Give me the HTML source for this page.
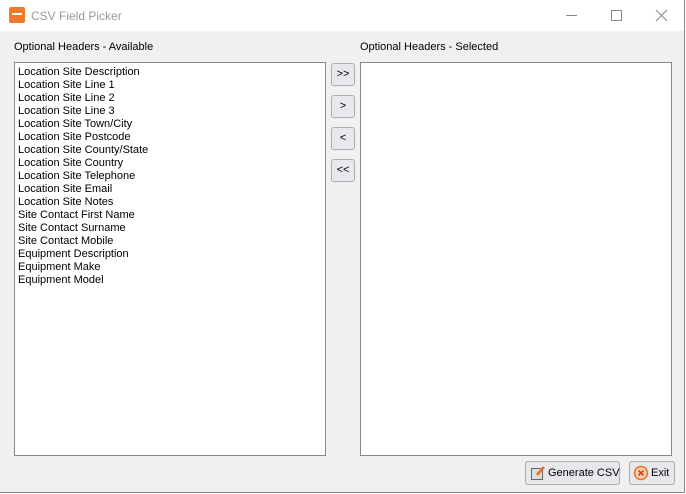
<!DOCTYPE html>
<html><head><style>
body{margin:0;width:686px;height:494px;overflow:hidden;background:#fff;font-family:"Liberation Sans",sans-serif;font-size:11px;color:#000;position:relative}
.win{position:absolute;left:0;top:0;width:684px;height:492px;border-right:1px solid #888;border-bottom:1px solid #888;background:#f0f0f0}
.title{position:absolute;left:0;top:0;width:684px;height:31px;background:#fff}
.title .t{position:absolute;left:31px;top:9px;font-size:12px;color:#999}
.ico{position:absolute;left:9px;top:7px;width:16px;height:16px;background:#f07a2a;border-radius:2px}
.ico:after{content:"";position:absolute;left:3px;top:6px;width:10px;height:2px;background:#fff}
.lbl{position:absolute;top:41px;font-size:11px}
.list{position:absolute;top:62px;height:392px;background:#fff;border:1px solid #828790}
.items{padding:3px 0 0 3px;line-height:13px}
.b{position:absolute;left:331px;width:22px;height:21px;border:1px solid #adadad;border-radius:3px;background:#e8e8ec;text-align:center;line-height:21px;font-size:11px}
.btn{position:absolute;top:461px;height:22px;border:1px solid #adadad;border-radius:3px;background:#e8e8ec;line-height:22px;font-size:11px;white-space:nowrap}
</style></head><body>
<div class="win">
<div class="title"><div class="ico"></div><div class="t">CSV Field Picker</div>
<svg style="position:absolute;left:560px;top:8px" width="120" height="16"><line x1="6" y1="7.5" x2="17" y2="7.5" stroke="#888"/><rect x="51.5" y="2.5" width="10" height="10" fill="none" stroke="#888"/><path d="M96 2L107 13M107 2L96 13" stroke="#888"/></svg></div>
<div class="lbl" style="left:14px">Optional Headers - Available</div>
<div class="lbl" style="left:360px">Optional Headers - Selected</div>
<div class="list" style="left:14px;width:310px"><div class="items">Location Site Description<br>Location Site Line 1<br>Location Site Line 2<br>Location Site Line 3<br>Location Site Town/City<br>Location Site Postcode<br>Location Site County/State<br>Location Site Country<br>Location Site Telephone<br>Location Site Email<br>Location Site Notes<br>Site Contact First Name<br>Site Contact Surname<br>Site Contact Mobile<br>Equipment Description<br>Equipment Make<br>Equipment Model</div></div>
<div class="list" style="left:360px;width:310px"></div>
<div class="b" style="top:63px">&gt;&gt;</div>
<div class="b" style="top:95px">&gt;</div>
<div class="b" style="top:127px">&lt;</div>
<div class="b" style="top:159px">&lt;&lt;</div>
<div class="btn" style="left:525px;width:93px"><svg style="position:absolute;left:4px;top:3px" width="16" height="16"><rect x="1.5" y="3.5" width="11" height="11" fill="#ddd" stroke="#666"/><path d="M7 10L14 2" stroke="#e8702a" stroke-width="2.5"/></svg><span style="position:absolute;left:22px">Generate CSV</span></div>
<div class="btn" style="left:629px;width:44px"><svg style="position:absolute;left:3px;top:3px" width="16" height="16"><circle cx="8" cy="8" r="6.5" fill="#fbd0b0" stroke="#e8702a" stroke-width="1.5"/><path d="M5.5 5.5L10.5 10.5M10.5 5.5L5.5 10.5" stroke="#d9481a" stroke-width="1.6"/></svg><span style="position:absolute;left:21px">Exit</span></div>
</div>
</body></html>
